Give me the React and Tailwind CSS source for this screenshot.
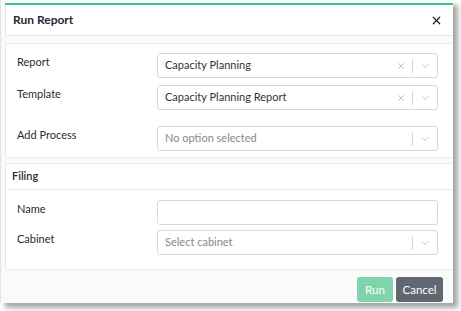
import { X, ChevronDown } from "lucide-react";

const SelectBox = ({ value, placeholder, clearable }) => (
	<div className="flex h-[25px] w-[281px] items-center rounded-[3px] border border-[#d9d9d9] bg-white pl-[7px] pr-[6px]">
		<span className={"flex-1 truncate " + (value ? "text-[#333]" : "text-[#888]")}>
			{value || placeholder}
		</span>
		{clearable && <X size={10} strokeWidth={2} className="mr-[6px] text-[#b5b5b5]" />}
		<span className="h-[14px] w-px bg-[#d6d6d6]" />
		<ChevronDown size={12} strokeWidth={1.5} className="ml-[6px] text-[#b5b5b5]" />
	</div>
);

const Row = ({ label, children, className = "" }) => (
	<div className={"flex items-start " + className}>
		<div className="w-[151px] pl-[11px] pt-[1px] text-[#2b2b2b]">{label}</div>
		{children}
	</div>
);

export default function App() {
	return (
		<div className="h-[311px] w-[461px] bg-white text-[11px] font-['Lato',sans-serif]">
			<div className="relative flex h-[303px] w-[453px] flex-col border-l border-[#e2e2e2] bg-[#fafafa] shadow-[5px_5px_5px_rgba(0,0,0,0.35)]">
				<div className="ml-[4px] mt-[3px] h-[2px] bg-[#3fc386]" />
				<div className="ml-[4px] flex h-[31px] items-center justify-between border-b border-l border-[#e6e6e6] bg-white pl-[7px] pr-[10px]">
					<span className="text-[12px] font-bold text-[#1f2a36]">Run Report</span>
					<X size={13} strokeWidth={2.2} className="text-[#222]" />
				</div>

				<div className="ml-[4px] mt-[7px] flex flex-col border border-r-0 border-[#ebebeb] bg-white pb-[6px] pt-[9px]">
					<Row label="Report">
						<SelectBox value="Capacity Planning" clearable />
					</Row>
					<Row label="Template" className="mt-[7px]">
						<SelectBox value="Capacity Planning Report" clearable />
					</Row>
					<Row label="Add Process" className="mt-[16px]">
						<SelectBox placeholder="No option selected" />
					</Row>
				</div>

				<div className="ml-[4px] mt-[5px] flex flex-col border border-r-0 border-[#ebebeb] bg-white">
					<div className="flex h-[26px] items-center border-b border-[#ebebeb] pl-[6px] font-semibold text-[#2b2b2b]">
						Filing
					</div>
					<div className="flex flex-col pb-[14px] pt-[10px]">
						<Row label="Name">
							<div className="h-[25px] w-[281px] rounded-[3px] border border-[#d9d9d9] bg-white" />
						</Row>
						<Row label="Cabinet" className="mt-[5px]">
							<SelectBox placeholder="Select cabinet" />
						</Row>
					</div>
				</div>

				<div className="mt-[7px] flex justify-end gap-[3px] pr-[10px]">
					<button className="h-[25px] w-[36px] rounded-[3px] bg-[#7fd4ab] text-[11.5px] text-white">Run</button>
					<button className="h-[25px] w-[47px] rounded-[3px] bg-[#5f6770] text-[11.5px] text-white">Cancel</button>
				</div>
			</div>
		</div>
	);
}
